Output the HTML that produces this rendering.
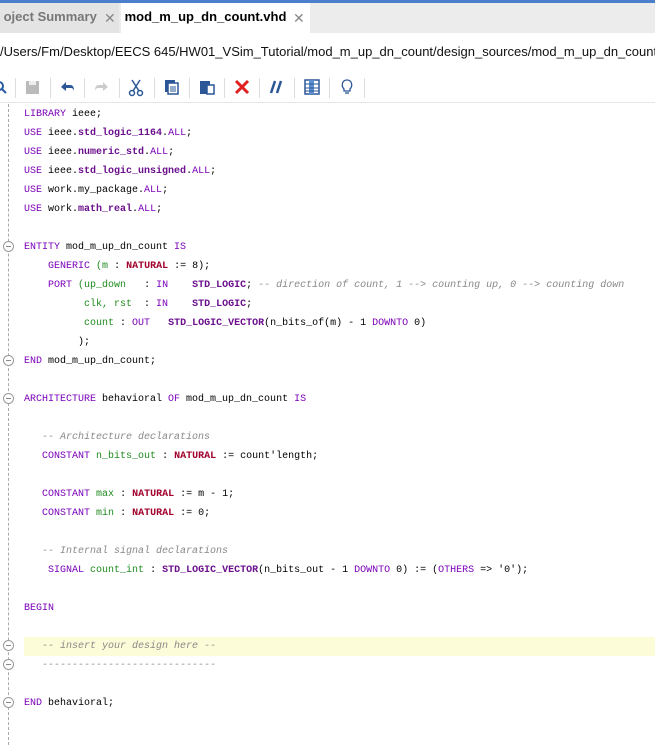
<!DOCTYPE html>
<html><head><meta charset="utf-8"><style>
body{margin:0;width:655px;height:745px;overflow:hidden;background:#fff;font-family:"Liberation Sans",sans-serif;position:relative}
.blue{position:absolute;left:0;top:0;width:655px;height:3px;background:#4b7fcb}
.tabbar{position:absolute;left:0;top:3px;width:655px;height:30px;background:#ececec}
.tab{position:absolute;top:0;height:30px;line-height:28px;font-size:13px;font-weight:bold}
.x{position:absolute;top:1px;color:#888;font-weight:normal;font-size:14px}
.path{position:absolute;left:0;top:44px;font-size:13px;color:#111;white-space:nowrap}
.tb{position:absolute;top:75px;height:28px;left:0;width:655px}
.sep{position:absolute;top:3px;width:1px;height:20px;background:#ddd}
.ic{position:absolute;top:4px}
.code{position:absolute;left:0;top:105px;width:655px;font-family:"Liberation Mono",monospace;font-size:10px;color:#000}
.l{height:19px;line-height:19px;white-space:pre;padding-left:24px;position:relative}
.k{color:#7a00b8}.g{color:#1e8a1e}.b{color:#6b0f8c;font-weight:bold}.n{color:#a0002a;font-weight:bold}.c{color:#888;font-style:italic}
.hl{background:#fdfcd8}
.gut{position:absolute;left:8px;top:104px;height:641px;border-left:1px dashed #aaa}
.fold{position:absolute;left:3px;width:9px;height:9px;border:1px solid #999;border-radius:50%;background:#fff}
.fold:after{content:"";position:absolute;left:2px;top:4px;width:5px;height:1px;background:#888}
</style></head><body>
<div class="blue"></div>
<div class="tabbar">
 <div class="tab" style="left:0;width:119px;color:#777;background:#e4e4e4">&nbsp;oject Summary<span class="x" style="left:104px">✕</span></div>
 <div class="tab" style="left:121px;width:189px;background:#fff;color:#000">&nbsp;mod_m_up_dn_count.vhd<span class="x" style="left:172px">✕</span></div>
</div>
<div class="path">/Users/Fm/Desktop/EECS 645/HW01_VSim_Tutorial/mod_m_up_dn_count/design_sources/mod_m_up_dn_count.vhd</div>
<div class="tb">
 <svg class="ic" style="left:-6px" width="14" height="16"><circle cx="5" cy="7" r="4" fill="none" stroke="#2a5aa0" stroke-width="2"/><path d="M8 10l4 4" stroke="#2a5aa0" stroke-width="2"/></svg>
 <div class="sep" style="left:15px"></div>
 <svg class="ic" style="left:25px" width="16" height="16"><rect x="1" y="2" width="13" height="13" fill="#bbb"/><rect x="4" y="2" width="7" height="4" fill="#eee"/></svg>
 <div class="sep" style="left:50px"></div>
 <svg class="ic" style="left:59px" width="16" height="16"><path d="M2 8l5-5v3h4c3 0 4 2 4 6c-1-3-2-3-4-3H7v3z" fill="#2b5797"/></svg>
 <div class="sep" style="left:84px"></div>
 <svg class="ic" style="left:94px" width="16" height="16"><path d="M14 8l-5-5v3H5c-3 0-4 2-4 6c1-3 2-3 4-3h4v3z" fill="#ccc"/></svg>
 <div class="sep" style="left:119px"></div>
 <svg class="ic" style="left:128px" width="16" height="18"><path d="M4 1l7 11M12 1L5 12" stroke="#2b5797" stroke-width="1.5"/><circle cx="4" cy="14" r="2.5" fill="none" stroke="#2b5797" stroke-width="1.5"/><circle cx="12" cy="14" r="2.5" fill="none" stroke="#2b5797" stroke-width="1.5"/></svg>
 <div class="sep" style="left:154px"></div>
 <svg class="ic" style="left:164px" width="16" height="16"><rect x="1" y="1" width="10" height="12" fill="#2b5797"/><rect x="4" y="4" width="10" height="11" fill="#fff" stroke="#2b5797" stroke-width="1.5"/><path d="M6 8h6M6 10h6M6 12h6" stroke="#2b5797"/></svg>
 <div class="sep" style="left:189px"></div>
 <svg class="ic" style="left:199px" width="16" height="16"><rect x="1" y="2" width="10" height="13" fill="#2b5797"/><rect x="8" y="6" width="7" height="9" fill="#fff" stroke="#2b5797" stroke-width="1.5"/></svg>
 <div class="sep" style="left:224px"></div>
 <svg class="ic" style="left:234px" width="16" height="16"><path d="M2 2l12 12M14 2L2 14" stroke="#e02020" stroke-width="3"/></svg>
 <div class="sep" style="left:259px"></div>
 <svg class="ic" style="left:268px" width="16" height="16"><path d="M7 2L3 14M13 2L9 14" stroke="#2b5797" stroke-width="2.5"/></svg>
 <div class="sep" style="left:294px"></div>
 <svg class="ic" style="left:304px" width="16" height="16"><rect x="1" y="1" width="14" height="14" fill="none" stroke="#2b5797" stroke-width="1.5"/><rect x="5" y="1" width="5" height="14" fill="#5b8fd0"/><path d="M1 5h14M1 9h14M1 12h14" stroke="#2b5797"/></svg>
 <div class="sep" style="left:329px"></div>
 <svg class="ic" style="left:339px" width="16" height="16"><path d="M5 10C2 7 3 1 8 1s6 6 3 9v2H5z" fill="none" stroke="#2b5797" stroke-width="1.3"/><path d="M6 14h4" stroke="#2b5797" stroke-width="1.3"/></svg>
 <div class="sep" style="left:364px"></div>
</div>
<div style="position:absolute;left:0;top:102px;width:655px;height:1px;background:#e6e6e6"></div>
<div class="gut"></div>
<div class="fold" style="top:241px"></div>
<div class="fold" style="top:355px"></div>
<div class="fold" style="top:393px"></div>
<div class="fold" style="top:640px"></div>
<div class="fold" style="top:659px"></div>
<div class="fold" style="top:697px"></div>
<div class="code">
<div class="l"><span class="k">LIBRARY</span> ieee;</div>
<div class="l"><span class="k">USE</span> ieee.<span class="b">std_logic_1164</span>.<span class="k">ALL</span>;</div>
<div class="l"><span class="k">USE</span> ieee.<span class="b">numeric_std</span>.<span class="k">ALL</span>;</div>
<div class="l"><span class="k">USE</span> ieee.<span class="b">std_logic_unsigned</span>.<span class="k">ALL</span>;</div>
<div class="l"><span class="k">USE</span> work.my_package.<span class="k">ALL</span>;</div>
<div class="l"><span class="k">USE</span> work.<span class="b">math_real</span>.<span class="k">ALL</span>;</div>
<div class="l"> </div>
<div class="l"><span class="k">ENTITY</span> mod_m_up_dn_count <span class="k">IS</span></div>
<div class="l">    <span class="k">GENERIC</span> <span class="g">(m</span> : <span class="n">NATURAL</span> := 8);</div>
<div class="l">    <span class="k">PORT</span> <span class="g">(up_down</span>   : <span class="k">IN</span>    <span class="b">STD_LOGIC</span>; <span class="c">-- direction of count, 1 --&gt; counting up, 0 --&gt; counting down</span></div>
<div class="l">          <span class="g">clk, rst</span>  : <span class="k">IN</span>    <span class="b">STD_LOGIC</span>;</div>
<div class="l">          <span class="g">count</span> : <span class="k">OUT</span>   <span class="b">STD_LOGIC_VECTOR</span>(n_bits_of(m) - 1 <span class="k">DOWNTO</span> 0)</div>
<div class="l">         );</div>
<div class="l"><span class="k">END</span> mod_m_up_dn_count;</div>
<div class="l"> </div>
<div class="l"><span class="k">ARCHITECTURE</span> behavioral <span class="k">OF</span> mod_m_up_dn_count <span class="k">IS</span></div>
<div class="l"> </div>
<div class="l">   <span class="c">-- Architecture declarations</span></div>
<div class="l">   <span class="k">CONSTANT</span> <span class="g">n_bits_out</span> : <span class="n">NATURAL</span> := count'length;</div>
<div class="l"> </div>
<div class="l">   <span class="k">CONSTANT</span> <span class="g">max</span> : <span class="n">NATURAL</span> := m - 1;</div>
<div class="l">   <span class="k">CONSTANT</span> <span class="g">min</span> : <span class="n">NATURAL</span> := 0;</div>
<div class="l"> </div>
<div class="l">   <span class="c">-- Internal signal declarations</span></div>
<div class="l">    <span class="k">SIGNAL</span> <span class="g">count_int</span> : <span class="b">STD_LOGIC_VECTOR</span>(n_bits_out - 1 <span class="k">DOWNTO</span> 0) := (<span class="k">OTHERS</span> =&gt; '0');</div>
<div class="l"> </div>
<div class="l"><span class="k">BEGIN</span></div>
<div class="l"> </div>
<div class="l" style="padding-left:0"><span class="hl" style="display:block;margin-left:24px;padding-left:0">   <span class="c">-- insert your design here --</span></span></div>
<div class="l">   <span class="c">-----------------------------</span></div>
<div class="l"> </div>
<div class="l"><span class="k">END</span> behavioral;</div>
</div>
</body></html>
